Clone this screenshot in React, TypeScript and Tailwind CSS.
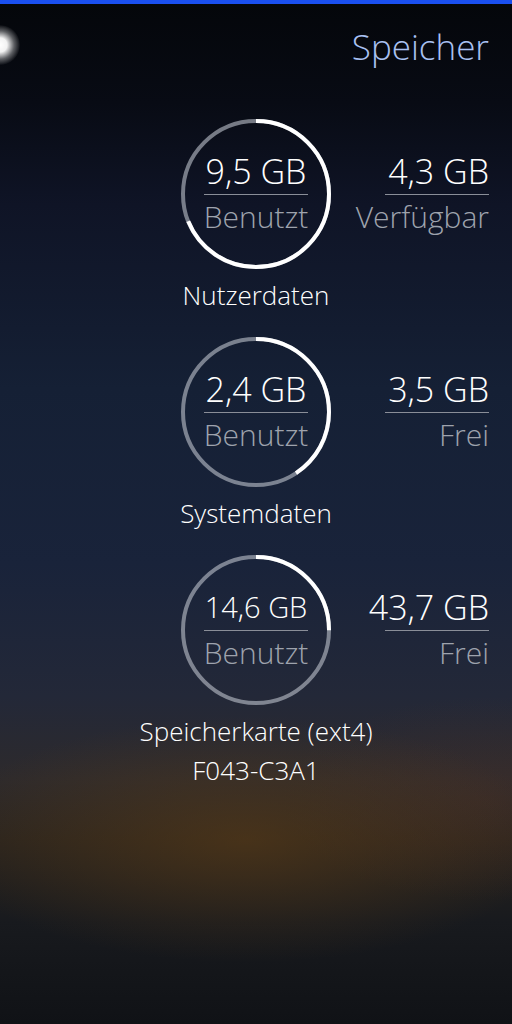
import React from 'react'

interface StorageRowProps {
  used: string
  free: string
  freeLabel: string
  fraction: number
  title: string[]
  smallUsed?: boolean
}

function Ring({ fraction }: { fraction: number }) {
  const r = 73
  const c = 2 * Math.PI * r
  return (
    <svg width="154" height="154" viewBox="0 0 154 154" className="absolute inset-0">
      <circle cx="77" cy="77" r={r} fill="none" stroke="rgba(185,190,200,0.62)" strokeWidth="4" />
      <circle
        cx="77"
        cy="77"
        r={r}
        fill="none"
        stroke="#ffffff"
        strokeWidth="4"
        strokeDasharray={`${c * fraction} ${c}`}
        transform="rotate(-90 77 77)"
      />
    </svg>
  )
}

function StorageRow({ used, free, freeLabel, fraction, title, smallUsed }: StorageRowProps) {
  return (
    <div className="flex flex-col items-center">
      <div className="grid w-full grid-cols-[1fr_154px_1fr] items-center">
        <div />
        <div className="relative h-[154px] w-[154px]">
          <Ring fraction={fraction} />
          <div className="absolute inset-0 flex flex-col items-center justify-center">
            <div
              className={`h-[44px] whitespace-nowrap text-center leading-[42px] text-white ${
                smallUsed ? 'text-[29px]' : 'text-[34px]'
              }`}
            >
              {used}
            </div>
            <div className="h-px w-[104px] bg-[#8a8e98]" />
            <div className="h-[44px] text-[30px] leading-[44px] text-[#9ea3ad]">Benutzt</div>
          </div>
        </div>
        <div className="flex justify-end pr-[23px]">
          <div className="flex flex-col items-end">
            <div className="h-[44px] whitespace-nowrap text-right text-[34px] leading-[42px] text-white">{free}</div>
            <div className="h-px w-[104px] bg-[#8a8e98]" />
            <div className="h-[44px] whitespace-nowrap text-[30px] leading-[44px] text-[#9ea3ad]">
              {freeLabel}
            </div>
          </div>
        </div>
      </div>
      <div className="mt-[5px] flex flex-col items-center text-[26px] leading-[39px] text-white">
        {title.map((t) => (
          <span key={t}>{t}</span>
        ))}
      </div>
    </div>
  )
}

export default function App() {
  return (
    <div
      className="relative h-[1024px] w-[512px] overflow-hidden bg-[radial-gradient(ellipse_60%_12%_at_48%_82%,rgba(95,62,22,0.55),transparent),radial-gradient(ellipse_40%_10%_at_95%_78%,rgba(80,50,40,0.35),transparent),linear-gradient(to_bottom,#04060a_0%,#080b14_10%,#0f1426_20%,#152035_38%,#19233a_55%,#232838_68%,#2d2a2c_76%,#2a241e_82%,#181a1e_90%,#101216_100%)] font-['Open_Sans',sans-serif] font-light"
    >
      <div className="h-[4px] w-full bg-[#1a4ff0]" />
      <div className="pointer-events-none absolute left-[-20px] top-[25px] h-[40px] w-[40px] rounded-full bg-[radial-gradient(circle,rgba(255,255,255,1)_0%,rgba(255,255,255,0.95)_25%,rgba(255,255,255,0.35)_50%,rgba(255,255,255,0)_72%)]" />
      <div className="flex justify-end pr-[23px] pt-[22px] text-[35px] leading-[42px] text-[#a9c1f2]">Speicher</div>
      <div className="mt-[49px] flex flex-col gap-[20px]">
        <StorageRow used="9,5 GB" free="4,3 GB" freeLabel="Verfügbar" fraction={0.688} title={['Nutzerdaten']} />
        <StorageRow used="2,4 GB" free="3,5 GB" freeLabel="Frei" fraction={0.407} title={['Systemdaten']} />
        <StorageRow
          used="14,6 GB"
          free="43,7 GB"
          freeLabel="Frei"
          fraction={0.25}
          title={['Speicherkarte (ext4)', 'F043-C3A1']}
          smallUsed
        />
      </div>
    </div>
  )
}
